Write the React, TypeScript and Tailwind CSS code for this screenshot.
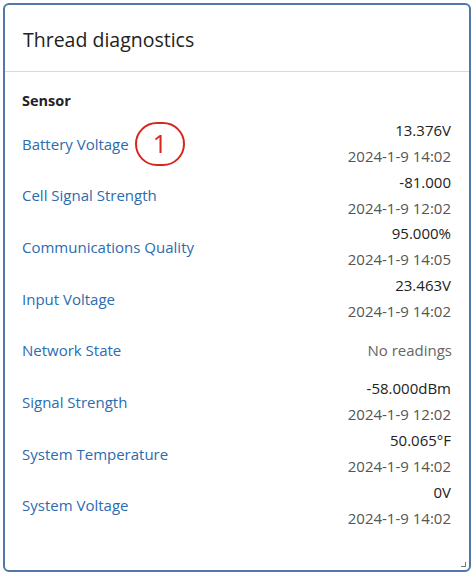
const ROWS = [
  { name: "Battery Voltage", value: "13.376V", time: "2024-1-9 14:02" },
  { name: "Cell Signal Strength", value: "-81.000", time: "2024-1-9 12:02" },
  { name: "Communications Quality", value: "95.000%", time: "2024-1-9 14:05" },
  { name: "Input Voltage", value: "23.463V", time: "2024-1-9 14:02" },
  { name: "Network State", value: null, time: null },
  { name: "Signal Strength", value: "-58.000dBm", time: "2024-1-9 12:02" },
  { name: "System Temperature", value: "50.065°F", time: "2024-1-9 14:02" },
  { name: "System Voltage", value: "0V", time: "2024-1-9 14:02" },
];

export default function App() {
  return (
    <div className="h-[575px] w-[474px] bg-white p-[3px] font-['Open_Sans',sans-serif]">
      <div className="relative flex h-full flex-col rounded-[6px] border-2 border-[#4f78a8] bg-white">
        {/* header */}
        <div className="flex h-[67px] items-center border-b border-[#d9d9d9] px-[18px] pt-[3px]">
          <h2 className="text-[19.5px] text-[#222]">Thread diagnostics</h2>
        </div>

        {/* body */}
        <div className="px-[17px] pt-[19px]">
          <p className="text-[14.5px] font-bold leading-[20px] text-[#222]">Sensor</p>
          <div className="mt-[7px] flex flex-col">
            {ROWS.map((r) => (
              <div key={r.name} className="flex h-[51.7px] items-center justify-between">
                <span className="relative text-[15px] text-[#2b6cb0]">
                  {r.name}
                  {r.name === "Battery Voltage" && (
                    <span className="absolute left-[113px] top-1/2 flex h-[44px] w-[50px] -translate-y-1/2 items-center justify-center rounded-full border-[2.5px] border-[#d8261f] text-[25px] leading-none text-[#d8261f]">
                      1
                    </span>
                  )}
                </span>
                {r.value ? (
                  <div className="flex flex-col items-end pr-[1px]">
                    <span className="text-[15px] leading-[24px] text-[#222]">{r.value}</span>
                    <span className="text-[15px] leading-[28px] text-[#555]">{r.time}</span>
                  </div>
                ) : (
                  <span className="text-[15px] text-[#666]">No readings</span>
                )}
              </div>
            ))}
          </div>
        </div>

        {/* resize grip */}
        <span className="absolute bottom-[3px] right-[3px] h-[5px] w-[5px] border-b border-r border-[#777]" />
      </div>
    </div>
  );
}
